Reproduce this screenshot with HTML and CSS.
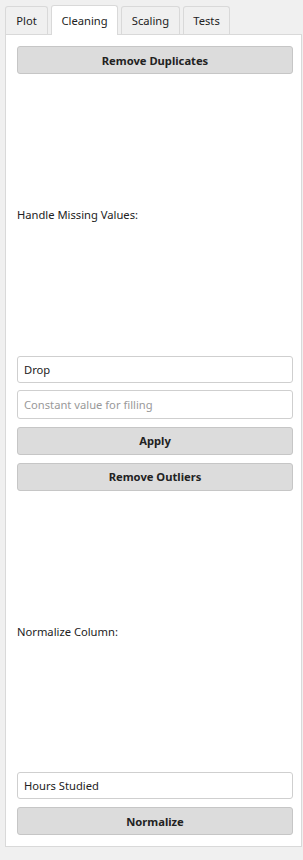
FILE: index.html
```html
<!DOCTYPE html>
<html>
<head>
<meta charset="utf-8">
<link rel="stylesheet" href="styles.css">
</head>
<body>
<div class="window">
  <div class="tabs">
    <div class="tab">Plot</div>
    <div class="tab active">Cleaning</div>
    <div class="tab">Scaling</div>
    <div class="tab">Tests</div>
  </div>
  <div class="pane">
    <button class="btn">Remove Duplicates</button>
    <div class="label">Handle Missing Values:</div>
    <div class="field">Drop</div>
    <div class="field placeholder tall">Constant value for filling</div>
    <button class="btn">Apply</button>
    <button class="btn">Remove Outliers</button>
    <div class="label">Normalize Column:</div>
    <div class="field">Hours Studied</div>
    <button class="btn">Normalize</button>
  </div>
</div>
</body>
</html>
```
FILE: styles.css
```css
html, body {
  margin: 0;
  padding: 0;
  background: #f0f0f0;
  width: 303px;
  height: 860px;
  overflow: hidden;
}
.window {
  font-family: "Noto Sans", "Open Sans", sans-serif;
  font-size: 11.2px;
  color: #222;
  padding: 5px 1px 0 5px;
  display: flex;
  flex-direction: column;
}
.tabs {
  display: flex;
  gap: 3px;
  height: 29px;
  position: relative;
  z-index: 2;
}
.tab {
  margin-top: 1px;
  height: 28px;
  box-sizing: border-box;
  border: 1px solid #d9d9d9;
  border-bottom: none;
  border-radius: 3px 3px 0 0;
  background: #f0f0f0;
  padding: 0;
  display: flex;
  align-items: center;
  justify-content: center;
}
.tab:nth-child(1) { width: 43px; }
.tab:nth-child(2) { width: 67px; }
.tab:nth-child(3) { width: 59px; }
.tab:nth-child(4) { width: 47px; }
.tab.active {
  margin-top: 0;
  height: 30px;
  background: #fff;
}
.pane {
  background: #fff;
  border: 1px solid #d9d9d9;
  height: 813px;
  box-sizing: border-box;
  padding: 11px 8px 11px 11px;
  display: flex;
  flex-direction: column;
  gap: 8px;
}
.btn {
  font: inherit;
  font-weight: bold;
  color: #222;
  height: 28px;
  flex: none;
  background: #dcdcdc;
  border: 1px solid #c6c6c6;
  border-radius: 3px;
  padding: 0;
}
.label {
  flex: 1;
  display: flex;
  align-items: center;
  color: #222;
}
.field {
  height: 27px;
  flex: none;
  box-sizing: border-box;
  border: 1px solid #cfcfcf;
  border-radius: 3px;
  padding: 0 6px;
  display: flex;
  align-items: center;
  background: #fff;
}
.field.tall { height: 29px; margin-top: -1px; }
.placeholder { color: #999; }
```
